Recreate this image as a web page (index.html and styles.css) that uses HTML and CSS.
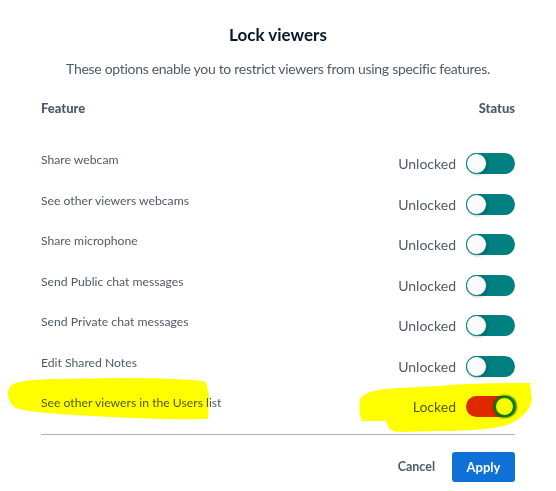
FILE: index.html
```html
<!DOCTYPE html>
<html lang="en">
<head>
<meta charset="utf-8">
<title>Lock viewers</title>
<link rel="stylesheet" href="styles.css">
</head>
<body>
<div class="modal">
  <h2 class="title">Lock viewers</h2>
  <p class="subtitle">These options enable you to restrict viewers from using specific features.</p>
  <div class="head-row">
    <span>Feature</span>
    <span>Status</span>
  </div>
  <div class="rows">
    <div class="row"><span class="label">Share webcam</span><span class="status">Unlocked<span class="toggle"><span class="knob"></span></span></span></div>
    <div class="row"><span class="label">See other viewers webcams</span><span class="status">Unlocked<span class="toggle"><span class="knob"></span></span></span></div>
    <div class="row"><span class="label">Share microphone</span><span class="status">Unlocked<span class="toggle"><span class="knob"></span></span></span></div>
    <div class="row"><span class="label">Send Public chat messages</span><span class="status">Unlocked<span class="toggle"><span class="knob"></span></span></span></div>
    <div class="row"><span class="label">Send Private chat messages</span><span class="status">Unlocked<span class="toggle"><span class="knob"></span></span></span></div>
    <div class="row"><span class="label">Edit Shared Notes</span><span class="status">Unlocked<span class="toggle"><span class="knob"></span></span></span></div>
    <div class="row"><span class="label">See other viewers in the Users list</span><span class="status">Locked<span class="toggle on"><span class="knob"></span></span></span></div>
  </div>
  <div class="divider"></div>
  <div class="footer">
    <button class="cancel">Cancel</button>
    <button class="apply">Apply</button>
  </div>
</div>
<svg class="highlight" width="556" height="491" viewBox="0 0 556 491">
  <path d="M9,388 C12,382 25,380 50,379 L120,378 C160,378 195,379 206,382 L209,395 L208,419 C180,420 130,418 90,416 C55,414 25,412 14,407 C8,402 7,394 9,388 Z"/>
  <path d="M360,400 C362,393 375,389 400,388 L440,386 C470,383 500,383 530,383 L532,400 C530,410 522,418 510,424 C495,429 470,431 440,431 L400,432 C390,432 388,428 386,421 L362,421 C359,414 359,405 360,400 Z"/>
</svg>
</body>
</html>
```
FILE: styles.css
```css
html, body {
  margin: 0;
  padding: 0;
  background: #ffffff;
}
body {
  width: 556px;
  height: 491px;
  position: relative;
  overflow: hidden;
  font-family: Lato, "Noto Sans", sans-serif;
  color: #4e5a66;
}
.modal {
  padding: 0 41px;
}
.title {
  margin: 0;
  padding-top: 24px;
  height: 22px;
  line-height: 22px;
  text-align: center;
  font-size: 17px;
  font-weight: 700;
  color: #06172a;
}
.subtitle {
  margin: 0;
  padding-top: 14px;
  line-height: 18px;
  text-align: center;
  font-size: 14px;
  letter-spacing: -0.3px;
  color: #4e5a66;
}
.head-row {
  display: flex;
  justify-content: space-between;
  margin-top: 22px;
  line-height: 16px;
  font-size: 13px;
  font-weight: 900;
}
.rows {
  margin-top: 28px;
}
.row {
  display: flex;
  justify-content: space-between;
  align-items: center;
  height: 40.5px;
}
.label {
  font-size: 12.2px;
  margin-bottom: 9px;
  color: #4e5a66;
}
.status {
  display: flex;
  align-items: center;
  gap: 10px;
  font-size: 14px;
  margin-top: -1px;
}
.toggle {
  display: flex;
  align-items: center;
  width: 49px;
  height: 21px;
  border-radius: 11px;
  background: #008081;
  box-sizing: border-box;
}
.knob {
  width: 21px;
  height: 21px;
  box-sizing: border-box;
  border-radius: 50%;
  background: #fafafa;
  border: 1px solid #008081;
  box-shadow: 1px 1px 3px rgba(0, 0, 0, 0.25);
}
.toggle.on {
  background: #df2721;
  justify-content: flex-end;
}
.toggle.on .knob {
  border: 2px solid #008081;
  box-shadow: 0 0 2px 1px rgba(0, 90, 60, 0.7), 2px 0 2px rgba(15, 112, 215, 0.7);
}
.divider {
  margin-top: 6px;
  height: 1px;
  background: #a7b3bd;
}
.footer {
  display: flex;
  justify-content: flex-end;
  align-items: center;
  margin-top: 17px;
  gap: 10px;
}
button {
  font-family: Lato, "Noto Sans", sans-serif;
  border: 0;
  cursor: pointer;
}
.cancel {
  background: transparent;
  color: #4e5a66;
  font-size: 12.5px;
  font-weight: 700;
  padding: 0 7px;
  height: 30px;
}
.apply {
  background: #0f70d7;
  color: #ffffff;
  font-size: 13px;
  font-weight: 700;
  width: 63px;
  height: 30px;
  border-radius: 3px;
}
.highlight {
  position: absolute;
  left: 0;
  top: 0;
  mix-blend-mode: multiply;
  fill: #ffff00;
  pointer-events: none;
}
```
